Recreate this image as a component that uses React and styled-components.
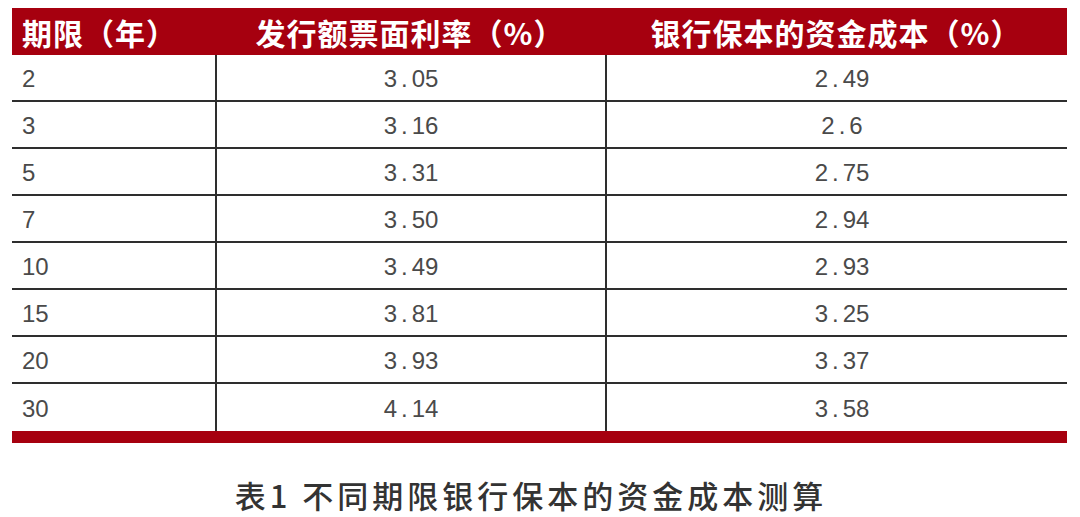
import React from "react";
import styled, { createGlobalStyle } from "styled-components";

const rows = [
  ["2", "3.05", "2.49"],
  ["3", "3.16", "2.6"],
  ["5", "3.31", "2.75"],
  ["7", "3.50", "2.94"],
  ["10", "3.49", "2.93"],
  ["15", "3.81", "3.25"],
  ["20", "3.93", "3.37"],
  ["30", "4.14", "3.58"],
];

const Global = createGlobalStyle`
  body {
    margin: 0;
    background: #ffffff;
    font-family: "Noto Sans CJK SC", "Noto Sans", sans-serif;
  }
`;

// the decimal point in the source has wide spacing around it
const Num = ({ value }) => {
  const [a, b] = value.split(".");
  return (
    <>
      {a}
      <Dot>.</Dot>
      {b}
    </>
  );
};

const App = () => {
  return (
    <>
      <Global />
      <Page>
        <Table>
          <Head>
            <HeadCell>期限（年）</HeadCell>
            <HeadCell center>发行额票面利率（%）</HeadCell>
            <HeadCell center>银行保本的资金成本（%）</HeadCell>
          </Head>
          {rows.map((r, i) => (
            <Row key={r[0]} last={i === rows.length - 1}>
              <Cell>{r[0]}</Cell>
              <Cell center divider>
                <Num value={r[1]} />
              </Cell>
              <Cell center divider right>
                <Num value={r[2]} />
              </Cell>
            </Row>
          ))}
          <BottomBar />
        </Table>
        <Caption>表1 不同期限银行保本的资金成本测算</Caption>
      </Page>
    </>
  );
};

const Page = styled.div`
  width: 1080px;
  height: 517px;
  padding: 8px 0 0 12px;
  box-sizing: border-box;
  overflow: hidden;
`;

const Table = styled.div`
  width: 1055px;
`;

const Head = styled.div`
  display: grid;
  grid-template-columns: 203px 390px 462px;
  height: 47px;
  background: #a6000f;
`;

const HeadCell = styled.div`
  display: flex;
  align-items: center;
  justify-content: ${(p) => (p.center ? "center" : "flex-start")};
  padding-left: ${(p) => (p.center ? "0" : "10px")};
  color: #ffffff;
  font-size: 30px;
  font-weight: 700;
  letter-spacing: 1px;
  line-height: 1;
`;

const Row = styled.div`
  display: grid;
  grid-template-columns: 203px 390px 462px;
  height: 47px;
  box-sizing: border-box;
  border-bottom: ${(p) => (p.last ? "none" : "2px solid #2e2e2e")};
`;

const Cell = styled.div`
  display: flex;
  align-items: center;
  justify-content: ${(p) => (p.center ? "center" : "flex-start")};
  padding-left: ${(p) => (p.center ? (p.right ? "10px" : "0") : "10px")};
  border-left: ${(p) => (p.divider ? "2px solid #2e2e2e" : "none")};
  color: #4a4a4a;
  font-family: "Liberation Sans", "DejaVu Sans", sans-serif;
  font-size: 24px;
  line-height: 1;
  padding-top: 2px;
`;

const Dot = styled.span`
  margin: 0 4px;
`;

const BottomBar = styled.div`
  height: 12px;
  background: #a6000f;
`;

const Caption = styled.div`
  margin-top: 33px;
  padding-right: 30px;
  text-align: center;
  color: #333333;
  font-size: 31px;
  font-weight: 500;
  letter-spacing: 4px;
  line-height: 1.2;
`;

export default App;
